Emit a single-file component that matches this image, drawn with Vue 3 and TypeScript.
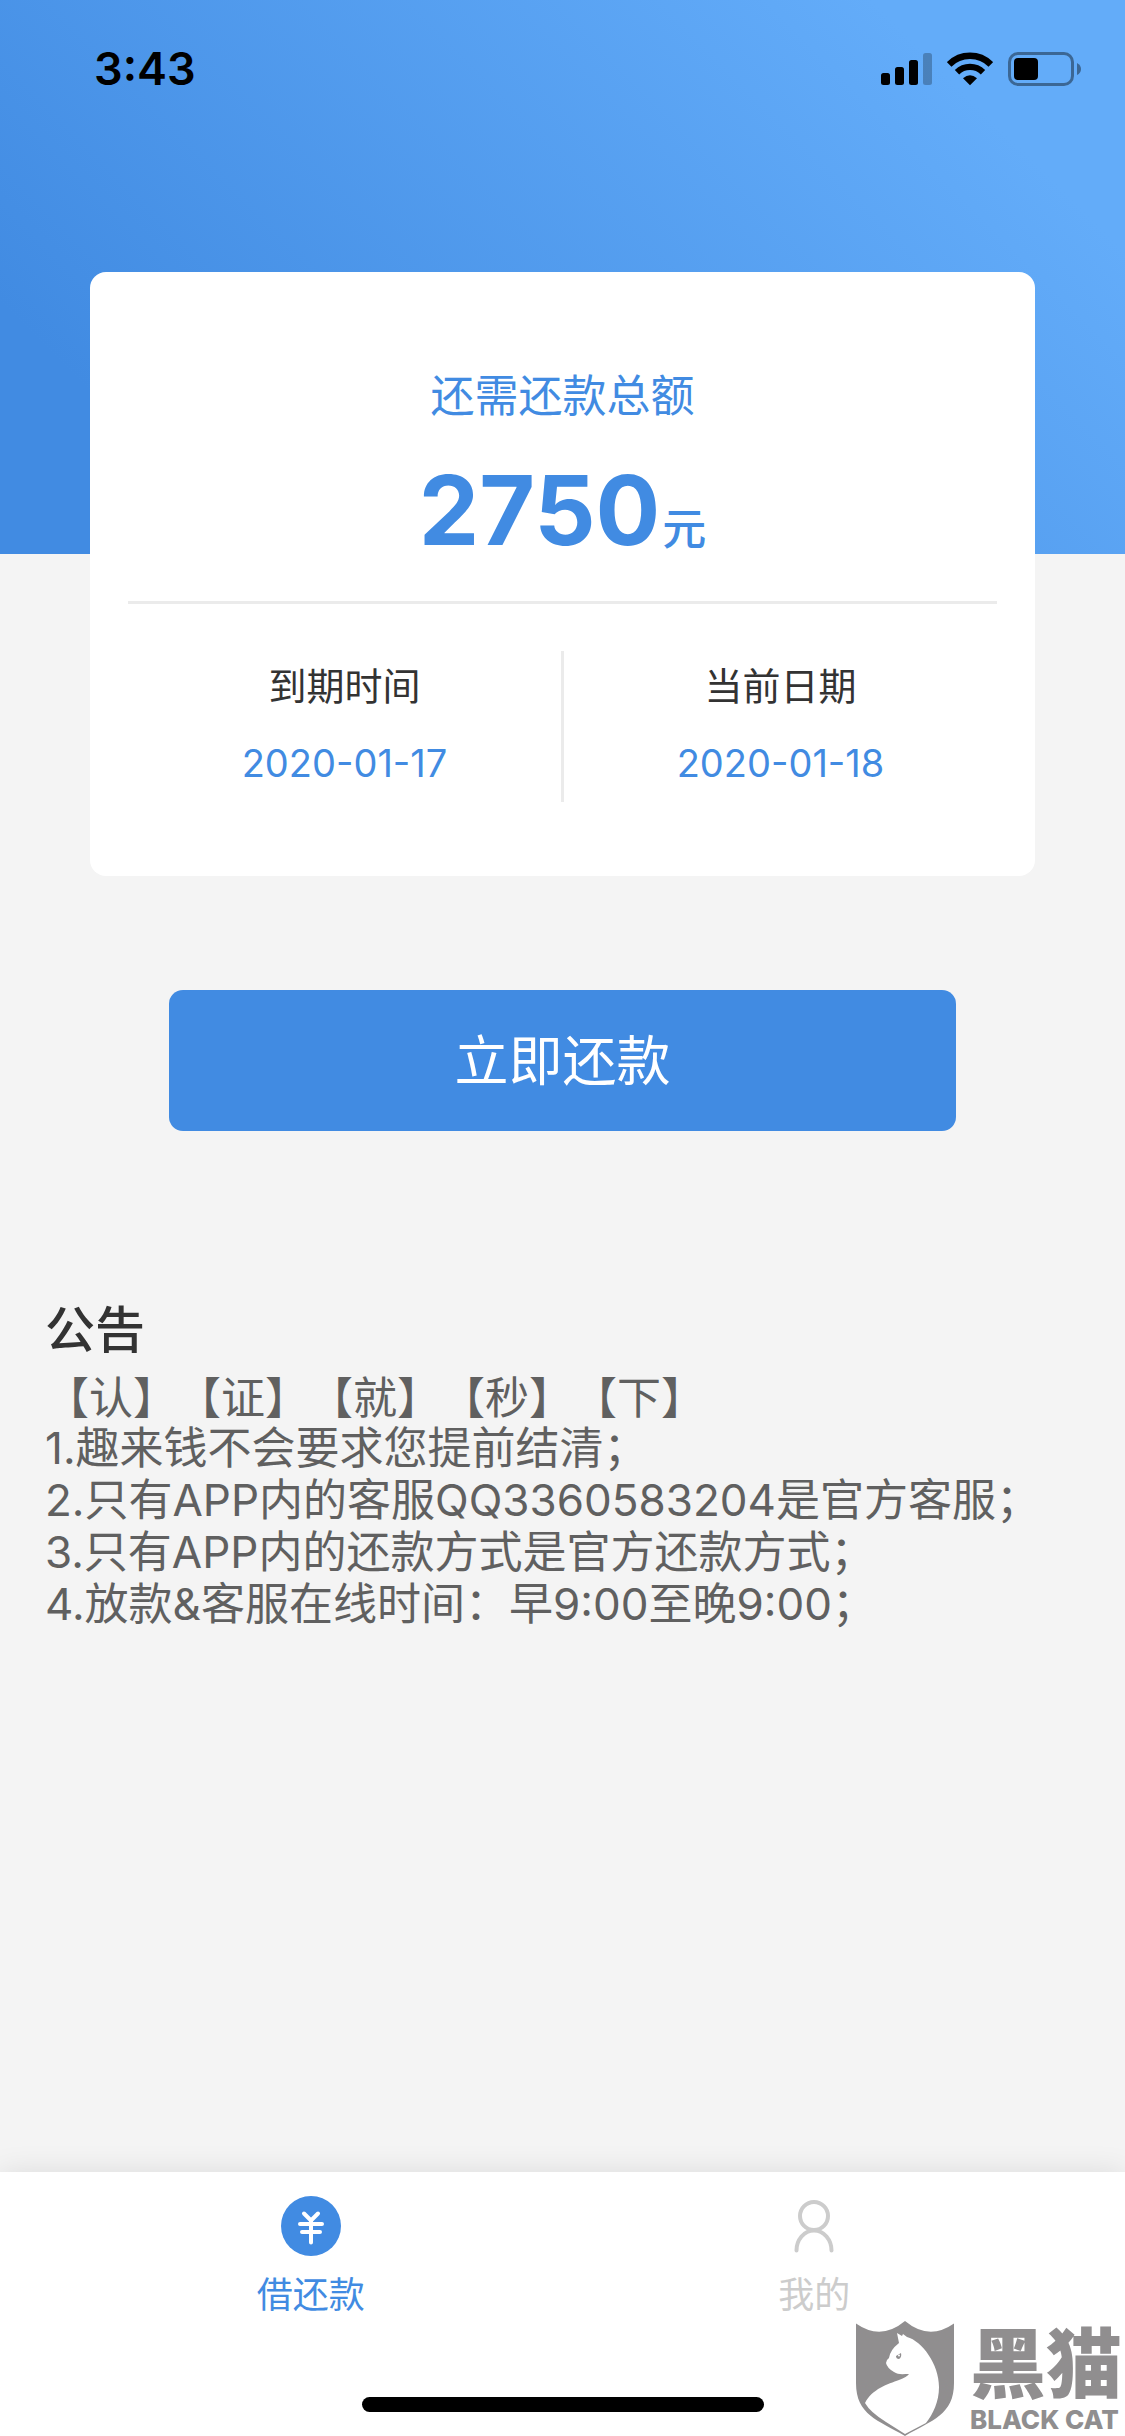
<script setup lang="ts">
interface DateItem {
  label: string
  value: string
}

const dates: DateItem[] = [
  { label: '到期时间', value: '2020-01-17' },
  { label: '当前日期', value: '2020-01-18' },
]

const slogan = '【认】【证】【就】【秒】【下】'

const notices: string[] = [
  '1.趣来钱不会要求您提前结清；',
  '2.只有APP内的客服QQ3360583204是官方客服；',
  '3.只有APP内的还款方式是官方还款方式；',
  '4.放款&客服在线时间：早9:00至晚9:00；',
]
</script>

<template>
  <div class="page">
    <header class="hero">
      <div class="status">
        <span class="time">3:43</span>
        <div class="indicators">
          <svg width="51" height="32" viewBox="0 0 51 32" aria-hidden="true">
            <rect x="0" y="20" width="9" height="12" rx="2.5" />
            <rect x="14" y="14" width="9" height="18" rx="2.5" />
            <rect x="28" y="7" width="9" height="25" rx="2.5" />
            <rect x="42" y="0" width="9" height="32" rx="2.5" opacity="0.25" />
          </svg>
          <svg width="46" height="34" viewBox="0 0 46 34" aria-hidden="true">
            <path d="M2.2 12.4A29.5 29.5 0 0 1 43.8 12.4" fill="none" stroke="#000" stroke-width="6.4" />
            <path d="M10 20.2A18.5 18.5 0 0 1 36 20.2" fill="none" stroke="#000" stroke-width="6.2" />
            <path d="M16 26.2Q23 20.4 30 26.2L23 33.2Z" />
          </svg>
          <svg width="73" height="34" viewBox="0 0 73 34" aria-hidden="true">
            <rect x="1.5" y="1.5" width="63" height="31" rx="8.5" fill="none" stroke="#000" stroke-width="3" opacity="0.4" />
            <rect x="6" y="6" width="24" height="22" rx="4" />
            <path d="M69 11Q73 13 73 17Q73 21 69 23Z" opacity="0.4" />
          </svg>
        </div>
      </div>
    </header>

    <main class="content">
      <section class="card">
        <h1 class="card-title">还需还款总额</h1>
        <p class="amount"><strong>2750</strong><span class="unit">元</span></p>
        <dl class="dates">
          <div v-for="item in dates" :key="item.label" class="date">
            <dt>{{ item.label }}</dt>
            <dd>{{ item.value }}</dd>
          </div>
        </dl>
      </section>

      <button type="button" class="repay">立即还款</button>

      <section class="notice">
        <h2>公告</h2>
        <p class="slogan">{{ slogan }}</p>
        <p v-for="line in notices" :key="line">{{ line }}</p>
      </section>
    </main>

    <footer class="bottom">
      <nav class="tabs">
        <a href="#repay" class="tab active">
          <svg width="60" height="60" viewBox="0 0 60 60" aria-hidden="true">
            <circle cx="30" cy="30" r="30" fill="#418be2" />
            <path d="M23 17.5L30 24.5L37 17.5M19 28H41M21 36H39M30 25V46.5" fill="none" stroke="#fff" stroke-width="4" stroke-linecap="round" stroke-linejoin="round" />
          </svg>
          <span>借还款</span>
        </a>
        <a href="#mine" class="tab">
          <svg width="60" height="60" viewBox="0 0 60 60" aria-hidden="true">
            <g fill="none" stroke="#ccc" stroke-width="4" stroke-linecap="round">
              <circle cx="30" cy="20" r="14" />
              <path d="M12.500 54.500C12.500 44 20 34.500 30 34.500S47.500 44 47.500 54.500" />
            </g>
          </svg>
          <span>我的</span>
        </a>
      </nav>
      <div class="home-bar"></div>
      <div class="watermark">
        <svg width="98" height="115" viewBox="0 0 98 115" aria-hidden="true">
          <path d="M0 2.500Q25 20 49 0Q73 20 98 2.500V62C98 94 76 99 49 115C22 99 0 94 0 62Z" fill="#908e8f" />
          <path d="M9 82C16 68 32 63 43 59Q51 56 53 53C47 53 42 54 38 51Q31 47 30 42Q30 39 33 37Q34 29 43 22L41 12L46 15L47 13L51 16C66 20 83 43 83 66C83 81 77 93 70 102L49 113L30 101Q14 91 9 82Z" fill="#fff" />
          <path d="M40 35L45 32Q46 36 43 38Q40 38 40 35Z" fill="#908e8f" />
          <circle cx="43" cy="34.500" r="1" fill="#fff" />
        </svg>
        <div class="brand">
          <span class="brand-cn">黑猫</span>
          <span class="brand-en">BLACK CAT</span>
        </div>
      </div>
    </footer>
  </div>
</template>

<style>
body {
  margin: 0;
  background: #f4f4f4;
}
</style>

<style scoped>
.page {
  display: flex;
  flex-direction: column;
  min-height: 100vh;
  background: #f4f4f4;
  color: #333;
  font-family: Inter, "Noto Sans CJK SC", sans-serif;
}

h1,
h2,
p,
dl,
dd {
  margin: 0;
}

.hero {
  height: 554px;
  background: linear-gradient(45deg, #418be2 15%, #63acf9 85%);
}

.status {
  display: flex;
  justify-content: space-between;
  align-items: center;
  padding: 39px 44px 0 94px;
  color: #000;
}

.time {
  font-size: 45px;
  line-height: 60px;
  font-weight: 600;
}

.indicators {
  display: flex;
  align-items: center;
  gap: 15px;
}

.content {
  display: flex;
  flex-direction: column;
}

.card {
  margin: -282px 90px 0;
  padding: 94px 38px 74px;
  border-radius: 16px;
  background: #fff;
  text-align: center;
}

.card-title {
  color: #418be2;
  font-size: 44px;
  line-height: 60px;
  font-weight: 400;
}

.amount {
  margin-top: 26px;
  padding-bottom: 33px;
  border-bottom: 3px solid #ebebeb;
  color: #418be2;
  font-size: 96px;
  line-height: 116px;
}

.amount strong {
  font-weight: 700;
}

.unit {
  margin-left: 2px;
  font-size: 44px;
  line-height: 60px;
  font-weight: 500;
}

.dates {
  display: flex;
  margin-top: 47px;
}

.date {
  flex: 1;
  height: 151px;
}

.date + .date {
  border-left: 3px solid #ebebeb;
}

.date dt {
  margin-top: 8px;
  font-size: 38px;
  line-height: 54px;
}

.date dd {
  margin-top: 23px;
  color: #418be2;
  font-size: 38px;
  line-height: 54px;
}

.repay {
  width: 70%;
  height: 141px;
  margin: 114px auto 0;
  padding: 0 0 6px;
  border: 0;
  border-radius: 14px;
  background: #418be2;
  color: #fff;
  font-family: inherit;
  font-size: 54px;
  font-weight: 400;
}

.notice {
  margin: 163px 45px 0;
  color: #606060;
  font-size: 44px;
  line-height: 52px;
}

.notice h2 {
  margin-bottom: 8px;
  color: #333;
  font-size: 50px;
  line-height: 72px;
  font-weight: 500;
}

.notice .slogan {
  line-height: 48px;
  text-spacing-trim: space-all;
}

.bottom {
  position: relative;
  margin-top: auto;
  padding-bottom: 24px;
  background: #fff;
  box-shadow: 0 0 28px rgba(0, 0, 0, 0.1);
}

.tabs {
  display: flex;
  padding: 24px 59px 0;
}

.tab {
  flex: 1;
  display: flex;
  flex-direction: column;
  align-items: center;
  gap: 12px;
  color: #ccc;
  font-size: 36px;
  line-height: 54px;
  text-decoration: none;
}

.tab.active {
  color: #418be2;
}

.home-bar {
  width: 402px;
  height: 15px;
  margin: 75px auto 0;
  border-radius: 8px;
  background: #000;
}

.watermark {
  position: absolute;
  right: 0;
  bottom: 0;
  display: flex;
  align-items: flex-end;
  gap: 16px;
  color: #908e8f;
}

.brand {
  display: flex;
  flex-direction: column;
  width: 155px;
}

.brand-cn {
  font-size: 76px;
  line-height: 80px;
  font-weight: 900;
}

.brand-en {
  font-size: 26px;
  line-height: 32px;
  font-weight: 800;
  white-space: nowrap;
}
</style>
